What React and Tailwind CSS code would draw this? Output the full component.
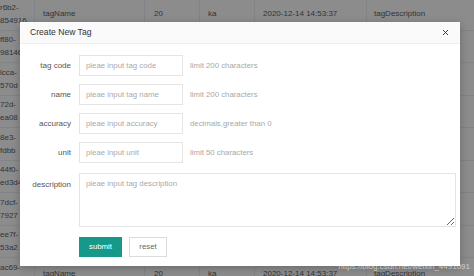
import { X } from "lucide-react";

const ids = [
  ["r6b2-", "854916"],
  ["ff80-", "98146"],
  ["lcca-", "570d"],
  ["72d-", "ea08"],
  ["8e3-", "fdbb"],
  ["44f0-", "ed3d4"],
  ["7dcf-", "7927"],
  ["ee7f-", "53a2"],
  ["ac69-", "7b1e"],
];

const fields = [
  { label: "tag code", placeholder: "pleae input tag code", hint: "limit 200 characters" },
  { label: "name", placeholder: "pleae input tag name", hint: "limit 200 characters" },
  { label: "accuracy", placeholder: "pleae input accuracy", hint: "decimals,greater than 0" },
  { label: "unit", placeholder: "pleae input unit", hint: "limit 50 characters" },
];

function TableBackground() {
  return (
    <div className="-mt-[2px]">
      {ids.map(([a, b], i) => (
        <div
          key={i}
          className="grid grid-cols-[35px_110px_55px_55px_112px_1fr] h-[32.5px] border-b border-[#ebeef5] text-[8px] text-[#606266]"
        >
          <div className="flex flex-col justify-center leading-[13px] border-r border-[#ebeef5] overflow-hidden">
            <span>{a}</span>
            <span>{b}</span>
          </div>
          <div className="flex items-center pl-2 border-r border-[#ebeef5]">tagName</div>
          <div className="flex items-center pl-[9px] border-r border-[#ebeef5]">20</div>
          <div className="flex items-center pl-2 border-r border-[#ebeef5]">ka</div>
          <div className="flex items-center pl-2 border-r border-[#ebeef5]">2020-12-14 14:53:37</div>
          <div className="flex items-center pl-[7px]">tagDescription</div>
        </div>
      ))}
    </div>
  );
}

export default function App() {
  return (
    <div
      className="relative w-[474px] h-[276px] overflow-hidden bg-white"
      style={{ fontFamily: '"Liberation Sans", Arial, sans-serif' }}
    >
      <TableBackground />
      <div className="absolute inset-0 bg-black/45" />

      <div className="absolute left-[20px] top-[22px] w-[440px] h-[244px] bg-white shadow-[0_2px_8px_rgba(0,0,0,0.25)] flex flex-col">
        <div className="h-[23px] flex items-center justify-between pl-[10px] pr-[10px] bg-[#fafafa] border-b border-[#eeeeee]">
          <span className="text-[8.6px] text-[#333]">Create New Tag</span>
          <X className="w-[9px] h-[9px] text-[#333]" strokeWidth={2.5} />
        </div>

        <div className="flex flex-col pt-[11px] pb-[9px]">
          <div className="flex flex-col gap-[8px]">
            {fields.map((f) => (
              <div key={f.label} className="flex items-center">
                <div className="w-[51px] text-right text-[8px] text-[#555]">{f.label}</div>
                <input
                  className="ml-[8px] w-[104px] h-[21px] border border-[#e4e4e4] px-[6px] text-[7.8px] text-[#555] placeholder:text-[#aaa] outline-none"
                  placeholder={f.placeholder}
                />
                <span className="ml-[7px] text-[7.8px] text-[#a8a8a8]">{f.hint}</span>
              </div>
            ))}
          </div>

          <div className="flex items-start mt-[10px]">
            <div className="w-[51px] text-right text-[8px] text-[#555] pt-[6px]">description</div>
            <textarea
              className="ml-[8px] w-[377px] h-[54px] border border-[#e4e4e4] px-[6px] pt-[4px] text-[7.8px] text-[#555] placeholder:text-[#aaa] outline-none"
              placeholder="pleae input tag description"
            />
          </div>

          <div className="flex items-center gap-[7px] mt-[10px] ml-[59px]">
            <button className="w-[43px] h-[20px] bg-[#16998a] text-white text-[7.8px]">submit</button>
            <button className="w-[38px] h-[20px] border border-[#dcdcdc] bg-white text-[#666] text-[7.8px]">reset</button>
          </div>
        </div>
      </div>

      <div className="absolute right-[4px] bottom-[3px] text-[8px] text-white/60">
        https://blog.csdn.net/weixin_4491091
      </div>
    </div>
  );
}
